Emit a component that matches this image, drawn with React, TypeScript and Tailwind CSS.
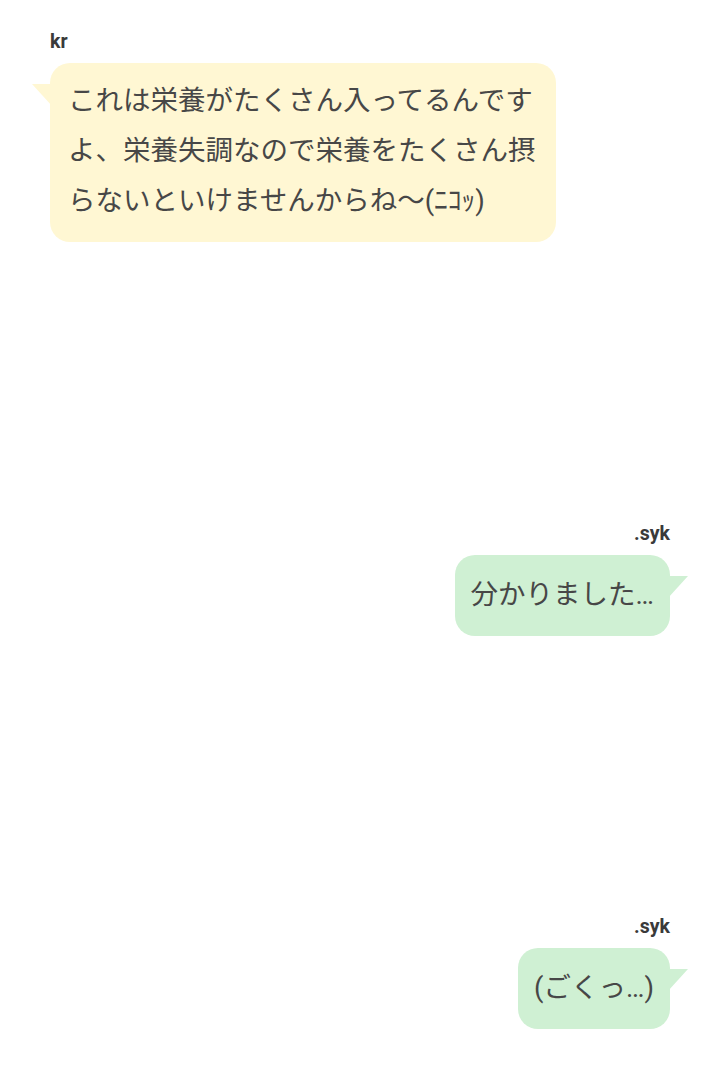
const messages = [
  {
    name: "kr",
    side: "left",
    text: "これは栄養がたくさん入ってるんですよ、栄養失調なので栄養をたくさん摂らないといけませんからね〜(ﾆｺｯ)",
  },
  { name: ".syk", side: "right", text: "分かりました…" },
  { name: ".syk", side: "right", text: "(ごくっ…)" },
];

function Bubble({ side, text }: { side: string; text: string }) {
  const left = side === "left";
  return (
    <div
      className={`relative rounded-[20px] text-[27.5px] leading-[50px] text-[#474747] ${
        left ? "w-[506px] bg-[#fff7d3] pb-[16px] pl-[18px] pr-[18px] pt-[13px]" : "bg-[#cff0d3] px-[16px] pb-[16px] pt-[15px]"
      }`}
      style={{ fontFamily: 'Roboto, "Noto Sans CJK JP", sans-serif' }}
    >
      {/* tail */}
      <svg
        width="20"
        height="22"
        viewBox="0 0 20 22"
        className={`absolute top-[21px] ${left ? "-left-[18px]" : "-right-[18px] scale-x-[-1]"}`}
      >
        <polygon points="0,0 20,0 20,22" fill={left ? "#fff7d3" : "#cff0d3"} />
      </svg>
      {text}
    </div>
  );
}

export default function App() {
  return (
    <div className="min-h-screen bg-white px-[50px] pt-[31px]" style={{ fontFamily: "Roboto, sans-serif" }}>
      {messages.map((m, i) => (
        <div
          key={i}
          className={`flex flex-col ${m.side === "left" ? "items-start" : "items-end"} ${
            i === 0 ? "" : i === 1 ? "mt-[281px]" : "mt-[280px]"
          }`}
        >
          <div className="mb-[10px] text-[19.5px] font-bold leading-[22px] text-[#3a3a3a]">{m.name}</div>
          <Bubble side={m.side} text={m.text} />
        </div>
      ))}
    </div>
  );
}
